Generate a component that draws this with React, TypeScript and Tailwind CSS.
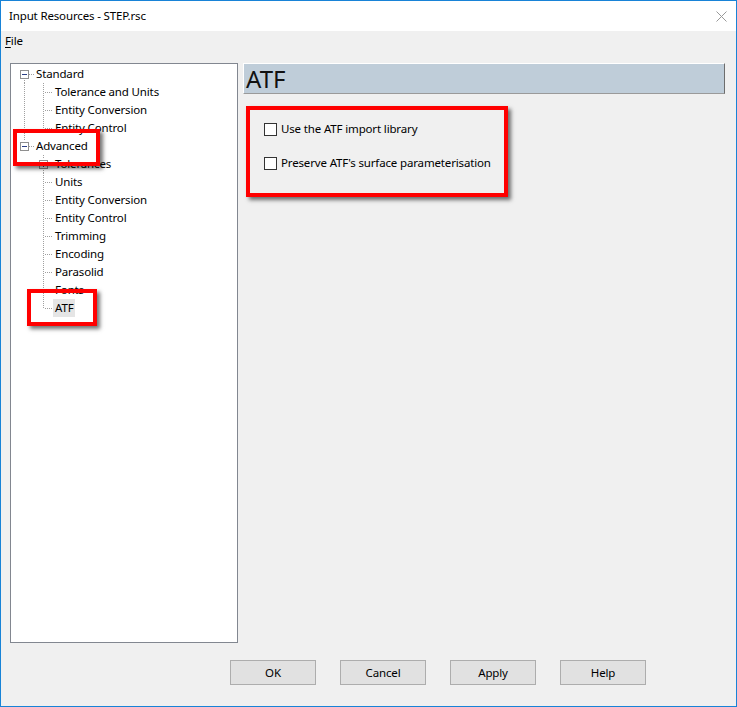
import React from "react"

type Node = {
  label: string
  level: 0 | 1
  box?: "minus" | "plus"
  first?: boolean
  last?: boolean
  parentContinues?: boolean
  selected?: boolean
}

const nodes: Node[] = [
  { label: "Standard", level: 0, box: "minus", first: true },
  { label: "Tolerance and Units", level: 1, parentContinues: true },
  { label: "Entity Conversion", level: 1, parentContinues: true },
  { label: "Entity Control", level: 1, parentContinues: true, last: true },
  { label: "Advanced", level: 0, box: "minus", last: true },
  { label: "Tolerances", level: 1, box: "plus" },
  { label: "Units", level: 1 },
  { label: "Entity Conversion", level: 1 },
  { label: "Entity Control", level: 1 },
  { label: "Trimming", level: 1 },
  { label: "Encoding", level: 1 },
  { label: "Parasolid", level: 1 },
  { label: "Fonts", level: 1 },
  { label: "ATF", level: 1, last: true, selected: true },
]

// dotted connector + optional expand box, one cell per row
function Connector({ node }: { node: Node }) {
  const dot = { stroke: "#a0a0a0", strokeWidth: 1, strokeDasharray: "1 1" }
  const topY = node.first ? 9 : 0
  const bottomY = node.last ? 9 : 18
  return (
    <svg width="25" height="18" className="shrink-0">
      {node.box ? (
        <>
          {!node.first && <line x1="13.5" y1="0" x2="13.5" y2="4" {...dot} />}
          {!node.last && <line x1="13.5" y1="13" x2="13.5" y2="18" {...dot} />}
          <line x1="18" y1="9.5" x2="23" y2="9.5" {...dot} />
          <rect x="9.5" y="5.5" width="8" height="8" fill="#fff" stroke="#8f8f8f" />
          <line x1="11" y1="9.5" x2="16" y2="9.5" stroke="#2b3f85" />
          {node.box === "plus" && <line x1="13.5" y1="7" x2="13.5" y2="12" stroke="#2b3f85" />}
        </>
      ) : (
        <>
          <line x1="13.5" y1={topY} x2="13.5" y2={bottomY} {...dot} />
          <line x1="15" y1="9.5" x2="23" y2="9.5" {...dot} />
        </>
      )}
    </svg>
  )
}

function TreeRow({ node }: { node: Node }) {
  return (
    <div className="flex h-[18px] items-center">
      {node.level === 1 && (
        <svg width="19" height="18" className="shrink-0">
          {node.parentContinues && (
            <line x1="13.5" y1="0" x2="13.5" y2="18" stroke="#a0a0a0" strokeDasharray="1 1" />
          )}
        </svg>
      )}
      <Connector node={node} />
      <span
        className={
          "-ml-[2px] px-[2px] leading-[18px] whitespace-nowrap " + (node.selected ? "bg-[#e5e5e5]" : "")
        }
      >
        {node.label}
      </span>
    </div>
  )
}

function Checkbox({ label }: { label: string }) {
  return (
    <label className="flex h-[16px] items-center gap-[4px]">
      <span className="h-[13px] w-[13px] border border-[#333] bg-white" />
      <span>{label}</span>
    </label>
  )
}

function DlgButton({ children }: { children: React.ReactNode }) {
  return (
    <button className="h-[25px] w-[86px] border border-[#adadad] bg-[#e1e1e1] text-black">
      {children}
    </button>
  )
}

export default function App() {
  return (
    <div
      className="relative box-border flex h-[707px] w-[737px] flex-col border border-[#1883d7] bg-[#f0f0f0] text-[11.5px] tracking-[-0.15px] text-black"
      style={{ fontFamily: '"Segoe UI", "Noto Sans", sans-serif' }}
    >
      {/* Title bar */}
      <div className="flex h-[30px] shrink-0 items-center justify-between bg-white pl-[8px] pr-[9px]">
        <span>Input Resources - STEP.rsc</span>
        <svg width="11" height="11" viewBox="0 0 11 11">
          <path d="M0.5 0.5 L10.5 10.5 M10.5 0.5 L0.5 10.5" stroke="#999" strokeWidth="1" />
        </svg>
      </div>

      {/* Menu */}
      <div className="flex h-[20px] shrink-0 items-center pl-[4px]">
        <span>
          <span className="underline underline-offset-2">F</span>ile
        </span>
      </div>

      {/* Body */}
      <div className="mt-[12px] flex gap-[5px] pl-[9px] pr-[11px]">
        <div className="h-[580px] w-[228px] shrink-0 border border-[#828790] bg-white pt-[1px]">
          {nodes.map((n, i) => (
            <TreeRow key={i} node={n} />
          ))}
        </div>

        <div className="flex flex-1 flex-col">
          <div className="h-[31px] border-t border-l border-t-white border-l-white border-r border-b border-r-[#6d6d6d] border-b-[#9a9a9a] bg-[#bfcdd9] pl-[2px] text-[24px] leading-[29px] tracking-normal text-[#111]">
            ATF
          </div>
          <div className="flex flex-col gap-[18px] pt-[27px] pl-[21px]">
            <Checkbox label="Use the ATF import library" />
            <Checkbox label="Preserve ATF's surface parameterisation" />
          </div>
        </div>
      </div>

      {/* Buttons */}
      <div className="mt-[17px] flex gap-[24px] pl-[229px]">
        <DlgButton>OK</DlgButton>
        <DlgButton>Cancel</DlgButton>
        <DlgButton>Apply</DlgButton>
        <DlgButton>Help</DlgButton>
      </div>

      {/* Red annotation boxes */}
      <div className="absolute left-[12px] top-[128px] h-[37px] w-[87px] border-4 border-[#ff0000] shadow-[3px_3px_4px_rgba(0,0,0,0.55)]" />
      <div className="absolute left-[26px] top-[288px] h-[37px] w-[70px] border-4 border-[#ff0000] shadow-[3px_3px_4px_rgba(0,0,0,0.55)]" />
      <div className="absolute left-[245px] top-[105px] h-[91px] w-[262px] border-4 border-[#ff0000] shadow-[3px_3px_4px_rgba(0,0,0,0.55)]" />
    </div>
  )
}
